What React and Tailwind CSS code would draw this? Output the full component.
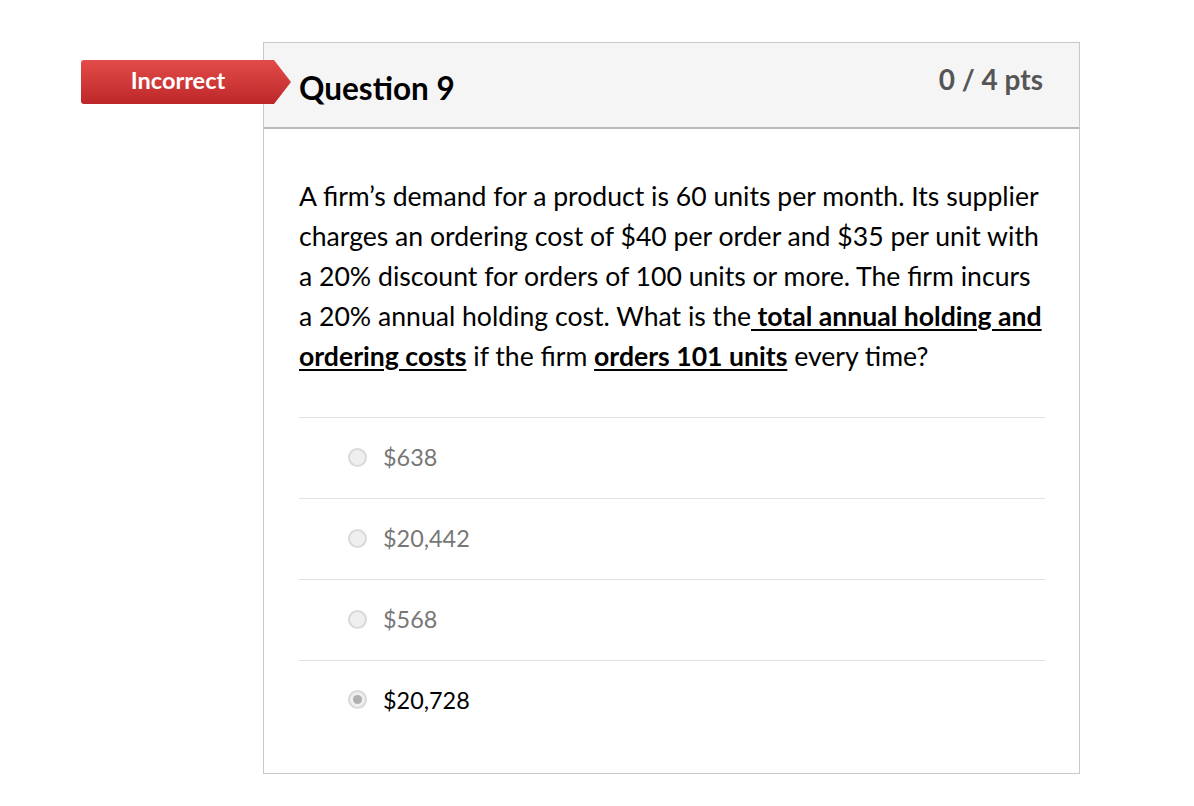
import React from 'react';

const answers = [
  { label: '$638', selected: false },
  { label: '$20,442', selected: false },
  { label: '$568', selected: false },
  { label: '$20,728', selected: true },
];

function Radio({ selected }) {
  return (
    <span className="flex h-[19px] w-[19px] items-center justify-center rounded-full border-2 border-[#d9d9d9] bg-[#efefef]">
      {selected && <span className="h-[9px] w-[9px] rounded-full bg-[#b0b0b0]" />}
    </span>
  );
}

export default function App() {
  return (
    <div className="min-h-[806px] w-full bg-white pt-[42px] font-['Lato',sans-serif]">
      <div className="relative ml-[263px] w-[817px] border border-[#c8c8c8]">
        {/* badge */}
        <div className="absolute left-[-183px] top-[17px] flex h-[44px] w-[210px] items-center rounded-l-[3px] bg-gradient-to-b from-[#e24b49] to-[#bd2628] pb-[2px] pr-[16px] text-[23.5px] font-bold text-white [clip-path:polygon(0_0,calc(100%-17px)_0,100%_50%,calc(100%-17px)_100%,0_100%)]">
          <span className="w-full text-center">Incorrect</span>
        </div>

        <div className="flex h-[86px] items-start justify-between border-b-2 border-[#b9b9b9] bg-[#f5f5f5] pl-[35px] pr-[36px]">
          <h2 className="pt-[25px] text-[31.5px] font-bold leading-[40px] text-black">Question 9</h2>
          <span className="pt-[18px] text-[28px] font-bold leading-[36px] text-[#555555]">0 / 4 pts</span>
        </div>

        <div className="pl-[35px] pr-[34px] pt-[47px] pb-[39px]">
          <p className="text-[26.6px] leading-[40px] text-black">
            A firm’s demand for a product is 60 units per month. Its supplier
            <br />
            charges an ordering cost of $40 per order and $35 per unit with
            <br />
            a 20% discount for orders of 100 units or more. The firm incurs
            <br />
            a 20% annual holding cost. What is the<span className="font-bold underline underline-offset-[3px]"> total annual holding and</span>
            <br />
            <span className="font-bold underline underline-offset-[3px]">ordering costs</span> if the firm{' '}
            <span className="font-bold underline underline-offset-[3px]">orders 101 units</span> every time?
          </p>

          <div className="mt-[41px]">
            {answers.map((a, i) => (
              <div
                key={a.label}
                className={`flex items-center gap-[16px] border-t border-[#e2e2e2] pl-[49px] ${i === 3 ? 'h-[74px] items-start pt-[29px]' : 'h-[81px] pb-[2px]'}`}
              >
                <Radio selected={a.selected} />
                <span className={`text-[23.4px] leading-[20px] ${a.selected ? 'text-black' : 'text-[#777777]'}`}>{a.label}</span>
              </div>
            ))}
          </div>
        </div>
      </div>
    </div>
  );
}
